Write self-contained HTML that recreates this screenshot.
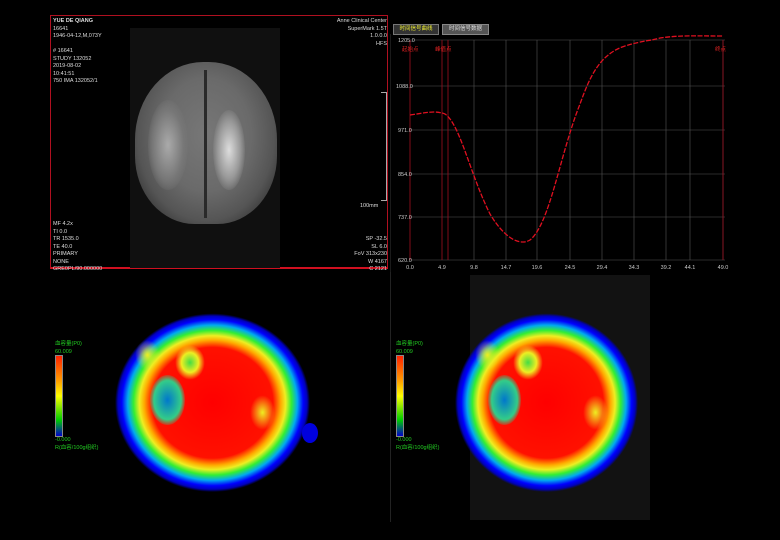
<!DOCTYPE html>
<html><head><meta charset="utf-8"><style>
body{margin:0;width:780px;height:540px;background:#000;position:relative;overflow:hidden;font-family:"Liberation Sans","Noto Sans CJK SC",sans-serif;}
.p{position:absolute}
.t{position:absolute;color:#ddd;font-size:5.5px;line-height:7.5px}
.g{color:#2c2}
.cb{border-radius:46% 46% 40% 40%;background:radial-gradient(closest-side ellipse at 50% 52%,#f00 0%,#f10 62%,#fa0 70%,#ee2 75%,#3e3 81%,#0ae 87%,#00f 93%,#00b 97%,rgba(0,0,150,0) 100%)}
.blob{position:absolute;border-radius:50%}
</style></head><body>
<div class="p" style="left:50px;top:15px;width:338px;height:254px;border:1px solid #b01020;border-bottom:2px solid #d01020;box-sizing:border-box;"></div>
<div class="p" style="left:130px;top:28px;width:150px;height:240px;background:#101010"></div>
<div class="p" style="left:135px;top:62px;width:142px;height:162px;border-radius:48% 48% 42% 42%;background:radial-gradient(ellipse at 50% 45%,#777 0%,#6a6a6a 45%,#555 68%,#333 85%,rgba(20,20,20,0) 100%)"></div>
<div class="p" style="left:148px;top:100px;width:40px;height:90px;border-radius:50%;background:radial-gradient(#aaa,#777 55%,rgba(0,0,0,0) 75%)"></div>
<div class="p" style="left:213px;top:110px;width:32px;height:80px;border-radius:50%;background:radial-gradient(#ddd,#999 50%,rgba(0,0,0,0) 75%)"></div>
<div class="p" style="left:204px;top:70px;width:3px;height:148px;background:#2a2a2a"></div>
<div class="t" style="left:53px;top:18px"><b>YUE DE QIANG</b><br>16641<br>1946-04-12,M,073Y<br><br># 16641<br>STUDY 132052<br>2019-08-02<br>10:41:51<br>750 IMA 132052/1</div>
<div class="t" style="left:53px;top:221px">MF 4.2x<br>TI 0.0<br>TR 1535.0<br>TE 40.0<br>PRIMARY<br>NONE<br>GRE0PL/90.000000</div>
<div class="t" style="left:330px;top:18px;width:57px;text-align:right">Anne Clinical Center<br>SuperMark 1.5T<br>1.0.0.0<br>HFS</div>
<div class="t" style="left:340px;top:236px;width:47px;text-align:right">SP -32.5<br>SL 6.0<br>FoV 313x230<br>W 4167<br>C 2121</div>
<div class="t" style="left:360px;top:203px">100mm</div>
<div class="p" style="left:381px;top:92px;width:5px;height:107px;border:1px solid #aaa;border-left:none"></div>
<div class="p" style="left:393px;top:24px;width:44px;height:9px;background:#333;border:1px solid #777;color:#ee3;font-size:5.5px;text-align:center;line-height:9px">时间信号曲线</div>
<div class="p" style="left:442px;top:24px;width:45px;height:9px;background:#555;border:1px solid #888;color:#ddd;font-size:5.5px;text-align:center;line-height:9px">时间信号数据</div>
<svg class="p" style="left:390px;top:34px" width="340" height="240" font-family="Liberation Sans" font-size="5.5" fill="#ccc">
<g stroke="#555" stroke-width="0.6">
<line x1="20" y1="6" x2="335" y2="6"/><line x1="20" y1="52" x2="335" y2="52"/><line x1="20" y1="96" x2="335" y2="96"/><line x1="20" y1="140" x2="335" y2="140"/><line x1="20" y1="183" x2="335" y2="183"/><line x1="20" y1="226" x2="335" y2="226"/>
<line x1="84" y1="6" x2="84" y2="226"/><line x1="116" y1="6" x2="116" y2="226"/><line x1="147" y1="6" x2="147" y2="226"/><line x1="180" y1="6" x2="180" y2="226"/><line x1="212" y1="6" x2="212" y2="226"/><line x1="244" y1="6" x2="244" y2="226"/><line x1="276" y1="6" x2="276" y2="226"/><line x1="300" y1="6" x2="300" y2="226"/><line x1="333" y1="6" x2="333" y2="226"/>
</g>
<g stroke="#a01020" stroke-width="0.8"><line x1="20" y1="6" x2="20" y2="226"/><line x1="52" y1="6" x2="52" y2="226"/><line x1="58" y1="6" x2="58" y2="226"/><line x1="333" y1="6" x2="333" y2="226"/></g>
<line x1="0" y1="0" x2="0" y2="240" stroke="#333"/>
<text x="8" y="8">1205.0</text><text x="6" y="54">1088.0</text><text x="8" y="98">971.0</text><text x="8" y="142">854.0</text><text x="8" y="185">737.0</text><text x="8" y="228">620.0</text>
<g fill="#d22"><text x="12" y="17">起始点</text><text x="45" y="17">峰值点</text><text x="325" y="17">终点</text></g>
<g text-anchor="middle"><text x="20" y="235">0.0</text><text x="52" y="235">4.9</text><text x="84" y="235">9.8</text><text x="116" y="235">14.7</text><text x="147" y="235">19.6</text><text x="180" y="235">24.5</text><text x="212" y="235">29.4</text><text x="244" y="235">34.3</text><text x="276" y="235">39.2</text><text x="300" y="235">44.1</text><text x="333" y="235">49.0</text></g>
<path d="M20,81 C35,79 45,76 55,80 C70,90 80,140 100,180 C115,205 130,212 140,206 C160,190 170,120 190,70 C200,42 210,20 235,12 C255,6 260,7 270,4 C290,1 310,2 333,2" fill="none" stroke="#e01020" stroke-width="1.3" stroke-dasharray="5 1.5"/>
</svg>
<div class="p" style="left:390px;top:272px;width:1px;height:250px;background:#222"></div>
<div class="p" style="left:470px;top:275px;width:180px;height:245px;background:#121212"></div>
<div class="p cb" style="left:115px;top:306px;width:195px;height:186px"></div>
<div class="p cb" style="left:455px;top:306px;width:183px;height:186px"></div>
<div class="blob" style="left:150px;top:375px;width:35px;height:50px;background:radial-gradient(#07c,#3c8 55%,rgba(255,200,0,0) 75%)"></div>
<div class="blob" style="left:488px;top:375px;width:33px;height:50px;background:radial-gradient(#07c,#3c8 55%,rgba(255,200,0,0) 75%)"></div>
<div class="blob" style="left:175px;top:345px;width:30px;height:35px;background:radial-gradient(#4d4,#ee2 40%,rgba(255,200,0,0) 70%)"></div>
<div class="blob" style="left:513px;top:345px;width:30px;height:35px;background:radial-gradient(#4d4,#ee2 40%,rgba(255,200,0,0) 70%)"></div>
<div class="blob" style="left:250px;top:395px;width:25px;height:35px;background:radial-gradient(#ee2,rgba(255,200,0,0) 70%)"></div>
<div class="blob" style="left:583px;top:395px;width:25px;height:35px;background:radial-gradient(#ee2,rgba(255,200,0,0) 70%)"></div>
<div class="blob" style="left:135px;top:340px;width:25px;height:30px;background:radial-gradient(#ee2,rgba(255,200,0,0) 70%)"></div>
<div class="blob" style="left:475px;top:340px;width:25px;height:30px;background:radial-gradient(#ee2,rgba(255,200,0,0) 70%)"></div>
<div class="p" style="left:302px;top:423px;width:16px;height:20px;border-radius:50%;background:#00d"></div>
<div class="p" style="left:55px;top:355px;width:8px;height:82px;border:1px solid #888;box-sizing:border-box;background:linear-gradient(#f20,#f90 30%,#ff0 50%,#0c0 80%,#00c)"></div>
<div class="p" style="left:396px;top:355px;width:8px;height:82px;border:1px solid #888;box-sizing:border-box;background:linear-gradient(#f20,#f90 30%,#ff0 50%,#0c0 80%,#00c)"></div>
<div class="t g" style="left:55px;top:341px">血容量(P0)<br>60.009</div>
<div class="t g" style="left:55px;top:437px">-0.000<br>R(血容/100g组织)</div>
<div class="t g" style="left:396px;top:341px">血容量(P0)<br>60.009</div>
<div class="t g" style="left:396px;top:437px">-0.000<br>R(血容/100g组织)</div>
</body></html>
